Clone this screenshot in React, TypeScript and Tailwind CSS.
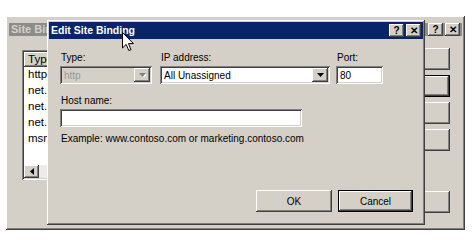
import React from "react";

const raised =
  "shadow-[inset_-1px_-1px_#404040,inset_1px_1px_#ffffff,inset_-2px_-2px_#808080,inset_2px_2px_#d4d0c8]";
const sunken =
  "shadow-[inset_1px_1px_#808080,inset_-1px_-1px_#ffffff,inset_2px_2px_#404040,inset_-2px_-2px_#d4d0c8]";

function CapButton({ children }: { children: React.ReactNode }) {
  return (
    <div
      className={`w-[15px] h-[13px] bg-[#d4d0c8] ${raised} flex items-center justify-center text-[10px] font-bold leading-none text-black`}
    >
      {children}
    </div>
  );
}

function Caption({ active, title }: { active: boolean; title: string }) {
  return (
    <div
      className={`flex items-center justify-between pr-[2px] ${
        active ? "h-[17px] bg-[#0a246a] pl-[2px]" : "h-[13px] bg-[#8e8c88] pl-[2px]"
      }`}
    >
      <span
        className={`font-bold leading-none whitespace-nowrap overflow-hidden ${
          active ? "text-white text-[10.5px]" : "text-[#d4d0c8] text-[11px] w-[38px]"
        }`}
      >
        {title}
      </span>
      <div className="flex gap-[2px]">
        <CapButton>?</CapButton>
        <CapButton>✕</CapButton>
      </div>
    </div>
  );
}

function Arrow({ disabled }: { disabled?: boolean }) {
  return (
    <div
      className={`w-[16px] h-full bg-[#d4d0c8] ${raised} flex items-center justify-center`}
    >
      <svg width="7" height="4" viewBox="0 0 7 4">
        {disabled && <path d="M1 1h7l-3.5 4z" fill="#ffffff" />}
        <path d="M0 0h7l-3.5 4z" fill={disabled ? "#808080" : "#000000"} />
      </svg>
    </div>
  );
}

function WinButton({
  label,
  def,
  w,
}: {
  label?: string;
  def?: boolean;
  w: string;
}) {
  return (
    <div
      className={`${w} h-[22px] bg-[#d4d0c8] flex items-center justify-center ${
        def ? "border border-black" : ""
      }`}
    >
      <div className={`w-full h-full ${raised} flex items-center justify-center`}>
        {label}
      </div>
    </div>
  );
}

export default function App() {
  const rows = ["http", "net.tcp", "net.pipe", "net.msmq", "msmq.formatname"];
  return (
    <div className="relative w-[474px] h-[251px] bg-white overflow-hidden font-['Liberation_Sans',Arial,sans-serif] text-[10px] text-black">
      {/* Back window: Site Bindings */}
      <div
        className={`absolute left-[6px] top-[16px] w-[459px] h-[214px] bg-[#d4d0c8] ${raised} flex flex-col px-[3px] pt-[7px]`}
      >
        <Caption active={false} title="Site Bindings" />
        <div className="flex justify-between mt-[12px] pl-[13px] pr-[12px]">
          <div
            className={`mt-[2px] w-[300px] h-[130px] bg-white ${sunken} p-[2px] flex flex-col text-[11.5px]`}
          >
            <div className="flex h-[15px]">
              <div
                className={`w-[60px] bg-[#d4d0c8] ${raised} pl-[4px] flex items-center overflow-hidden whitespace-nowrap`}
              >
                <span className="w-[20px] overflow-hidden">Type</span>
              </div>
              <div className={`w-[100px] bg-[#d4d0c8] ${raised}`} />
            </div>
            <div className="flex flex-col">
              {rows.map((r) => (
                <div
                  key={r}
                  className="h-[16px] pl-[4px] flex items-center whitespace-nowrap"
                >
                  <span className="w-[20px] overflow-hidden">{r}</span>
                </div>
              ))}
            </div>
            <div className="mt-auto h-[13px] flex bg-[#ecebe8]">
              <div className={`w-[15px] h-full bg-[#d4d0c8] ${raised} flex items-center justify-center`}>
                <svg width="4" height="7" viewBox="0 0 4 7">
                  <path d="M4 0v7L0 3.5z" fill="#000" />
                </svg>
              </div>
            </div>
          </div>
          <div className="flex flex-col gap-[5px]">
            <WinButton w="w-[100px]" />
            <WinButton w="w-[100px]" def />
            <WinButton w="w-[100px]" />
            <WinButton w="w-[100px]" />
            <div className="mt-[35px]">
              <WinButton w="w-[100px]" />
            </div>
          </div>
        </div>
      </div>

      {/* Front window: Edit Site Binding */}
      <div
        className={`absolute left-[47px] top-[20px] w-[378px] h-[205px] bg-[#d4d0c8] ${raised} p-[2px] flex flex-col`}
      >
        <Caption active title="Edit Site Binding" />
        <div className="flex-1 flex flex-col pl-[11px] pr-[10px] pt-[12px] pb-[11px]">
          <div className="flex">
            <div className="w-[92px] flex flex-col">
              <div className="h-[13px] leading-[13px] pl-[1px]">Type:</div>
              <div
                className={`mt-[2px] h-[18px] bg-[#d4d0c8] ${sunken} p-[2px] flex items-center`}
              >
                <span className="flex-1 pl-[2px] text-[#9a9894]">http</span>
                <Arrow disabled />
              </div>
            </div>
            <div className="ml-[8px] w-[170px] flex flex-col">
              <div className="h-[13px] leading-[13px] pl-[1px]">IP address:</div>
              <div className={`mt-[2px] h-[18px] bg-white ${sunken} p-[2px] flex items-center`}>
                <span className="flex-1 pl-[2px]">All Unassigned</span>
                <Arrow />
              </div>
            </div>
            <div className="ml-[6px] w-[47px] flex flex-col">
              <div className="h-[13px] leading-[13px] pl-[1px]">Port:</div>
              <div className={`mt-[2px] h-[18px] bg-white ${sunken} pl-[4px] flex items-center`}>
                80
              </div>
            </div>
          </div>
          <div className="mt-[10px] h-[13px] leading-[13px] pl-[1px]">Host name:</div>
          <div className={`mt-[2px] w-[242px] h-[18px] bg-white ${sunken}`} />
          <div className="mt-[5px] h-[13px] leading-[13px] pl-[1px]">
            Example: www.contoso.com or marketing.contoso.com
          </div>
          <div className="mt-auto flex justify-end gap-[6px]">
            <WinButton label="OK" w="w-[76px]" />
            <WinButton label="Cancel" w="w-[75px]" def />
          </div>
        </div>
      </div>

      {/* Mouse cursor */}
      <svg
        className="absolute left-[122px] top-[32px]"
        width="13"
        height="20"
        viewBox="0 0 13 20"
      >
        <path
          d="M0.5 0.5 L0.5 16 L4.2 12.4 L6.8 18.5 L9 17.6 L6.5 11.6 L11.5 11.6 Z"
          fill="#ffffff"
          stroke="#000000"
          strokeWidth="1"
          strokeLinejoin="miter"
        />
      </svg>
    </div>
  );
}
